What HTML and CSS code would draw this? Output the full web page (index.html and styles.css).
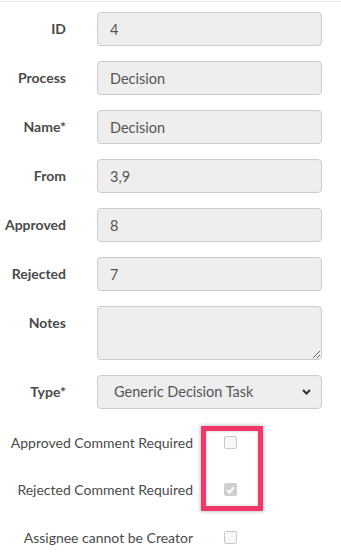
FILE: index.html
```html
<!DOCTYPE html>
<html>
<head>
<meta charset="utf-8">
<link rel="stylesheet" href="styles.css">
</head>
<body>
<div class="page">
  <form class="form">
    <div class="row"><label class="lbl">ID</label><input class="ctl" value="4" disabled></div>
    <div class="row"><label class="lbl">Process</label><input class="ctl" value="Decision" disabled></div>
    <div class="row"><label class="lbl">Name*</label><input class="ctl" value="Decision" disabled></div>
    <div class="row"><label class="lbl">From</label><input class="ctl" value="3,9" disabled></div>
    <div class="row"><label class="lbl">Approved</label><input class="ctl" value="8" disabled></div>
    <div class="row"><label class="lbl">Rejected</label><input class="ctl" value="7" disabled></div>
    <div class="row"><label class="lbl">Notes</label><textarea class="ctl area" disabled></textarea></div>
    <div class="row"><label class="lbl">Type*</label>
      <div class="ctl select"><span>Generic Decision Task</span>
        <svg class="chev" width="9" height="6" viewBox="0 0 9 6"><path d="M1 1 L4.5 4.5 L8 1" fill="none" stroke="#333" stroke-width="2"/></svg>
      </div>
    </div>
    <div class="checks">
      <div class="crow"><span class="clbl">Approved Comment Required</span><span class="box"></span></div>
      <div class="crow"><span class="clbl">Rejected Comment Required</span><span class="box checked"><svg width="9" height="8" viewBox="0 0 9 8"><path d="M1 4 L3.5 6.5 L8 1.2" fill="none" stroke="#fff" stroke-width="2"/></svg></span></div>
      <div class="crow"><span class="clbl">Assignee cannot be Creator</span><span class="box"></span></div>
      <div class="highlight"></div>
    </div>
  </form>
</div>
</body>
</html>
```
FILE: styles.css
```css
* { box-sizing: border-box; }
html, body { margin: 0; padding: 0; background: #fff; }
body { font-family: "Lato", "Open Sans", sans-serif; font-size: 14px; color: #555; }
.page { border-top: 1px solid #e6e6e6; margin-top: 1px; padding-top: 10px; width: 341px; height: 556px; overflow: hidden; }
.form { display: flex; flex-direction: column; }
.row { display: flex; align-items: flex-start; margin-bottom: 15px; }
.lbl { width: 66px; text-align: right; font-weight: 700; color: #4a4a4a; padding-top: 7px; line-height: 20px; white-space: nowrap; }
.ctl { margin-left: 31px; width: 225px; height: 34px; background: #eee; border: 1px solid #ccc; border-radius: 4px; padding: 6px 12px; font: inherit; font-size: 14.5px; color: #555; line-height: 20px; }
.area { height: 54px; resize: vertical; }
.select { display: flex; align-items: center; justify-content: space-between; padding-left: 16px; padding-right: 10px; }
.chev { display: block; }
.checks { position: relative; }
.crow { display: flex; align-items: center; height: 36px; margin-bottom: 11.5px; }
.clbl { width: 193px; text-align: right; color: #4a4a4a; font-size: 14px; white-space: nowrap; }
.box { margin-left: 31px; width: 13px; height: 13px; border: 1px solid #c8c8c8; border-radius: 2px; background: #f7f7f7; display: flex; align-items: center; justify-content: center; }
.box.checked { background: #cfcfcf; border-color: #cfcfcf; }
.highlight { position: absolute; left: 201px; top: 2px; width: 62px; height: 85px; border: 5px solid #f2386a; box-shadow: 0 0 4px rgba(0,0,0,0.35), inset 0 0 3px rgba(0,0,0,0.25); }
```
